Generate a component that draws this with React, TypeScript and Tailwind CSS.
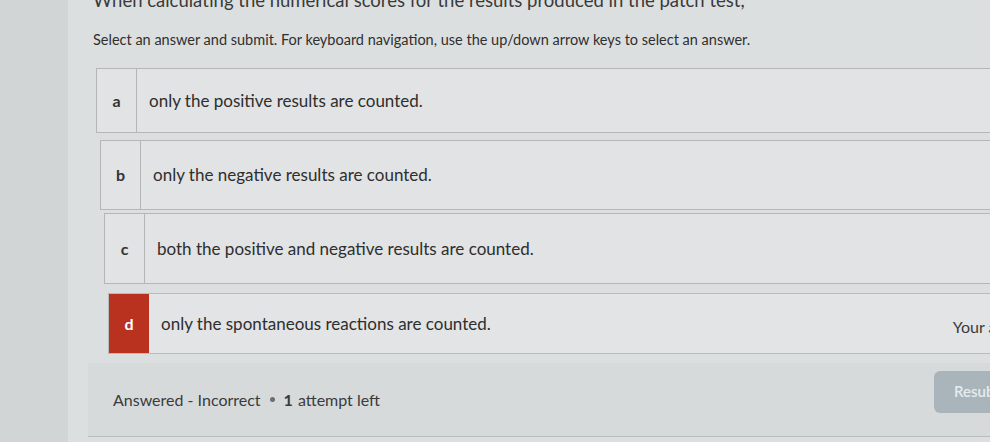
import React from "react";

type Option = {
  letter: string;
  text: string;
  rowClass: string;
  selected?: boolean;
};

const options: Option[] = [
  { letter: "a", text: "only the positive results are counted.", rowClass: "ml-[96px] mt-[0px] h-[65px]" },
  { letter: "b", text: "only the negative results are counted.", rowClass: "ml-[100px] mt-[7px] h-[70px]" },
  { letter: "c", text: "both the positive and negative results are counted.", rowClass: "ml-[104px] mt-[3px] h-[71px]" },
  {
    letter: "d",
    text: "only the spontaneous reactions are counted.",
    rowClass: "ml-[108px] mt-[9px] h-[61px]",
    selected: true,
  },
];

function AnswerRow({ option }: { option: Option }) {
  const isSelected = option.selected === true;

  return (
    <div
      className={`flex w-[1000px] shrink-0 items-stretch border ${option.rowClass} ${
        isSelected ? "border-[#b9bcbd] bg-[#e2e4e5]" : "border-[#b4b7b8] bg-[#e1e3e4]"
      }`}
    >
      <div
        className={`flex w-[40px] shrink-0 items-center justify-center text-[16px] font-bold ${
          isSelected ? "bg-[#b8321f] text-white" : "border-r border-[#b4b7b8] text-[#333]"
        }`}
      >
        {option.letter}
      </div>
      <div className="flex flex-1 items-center pl-[12px] text-[17px] text-[#2e2e2e]">{option.text}</div>
      {isSelected ? (
        <div className="flex items-center pr-[68px] pt-[6px] text-[16px] text-[#3a3a3a]">Your answer</div>
      ) : null}
    </div>
  );
}

export default function App() {
  return (
    <div
      className="flex h-[442px] w-[990px] overflow-hidden bg-[#d3d6d7]"
      style={{ fontFamily: "Lato, 'Noto Sans', sans-serif" }}
    >
      <div className="w-[68px] shrink-0 bg-[#d2d5d6]" />
      <div className="flex min-w-0 flex-1 flex-col overflow-hidden bg-[#dcdfe0]">
        <div className="-mt-[12px] ml-[25px] whitespace-nowrap text-[18.5px] leading-[24px] text-[#3a3a3a]">
          When calculating the numerical scores for the results produced in the patch test,
        </div>
        <div className="ml-[25px] mt-[18px] whitespace-nowrap text-[14.5px] leading-[20px] text-[#2f2f2f]">
          Select an answer and submit. For keyboard navigation, use the up/down arrow keys to select an answer.
        </div>

        <div className="-ml-[68px] mt-[18px] flex flex-col">
          {options.map((option) => (
            <AnswerRow key={option.letter} option={option} />
          ))}
        </div>

        <div className="ml-[20px] mt-[9px] flex h-[74px] w-[1000px] shrink-0 items-center border-b border-[#b9bcbd] bg-[#d7dadb]">
          <div className="ml-[25px] flex items-center text-[16px] text-[#3b3b3b]">
            <span>Answered - Incorrect</span>
            <span className="mx-[9px] h-[5px] w-[5px] rounded-full bg-[#6b6f71]" />
            <span className="font-bold">1</span>
            <span className="ml-[5px]">attempt left</span>
          </div>
          <button
            type="button"
            className="ml-[554px] mt-[-16px] h-[42px] rounded-[6px] bg-[#a9b5bb] px-[20px] text-[15px] font-semibold text-[#e6ecef]"
          >
            Resubmit
          </button>
        </div>
      </div>
    </div>
  );
}
